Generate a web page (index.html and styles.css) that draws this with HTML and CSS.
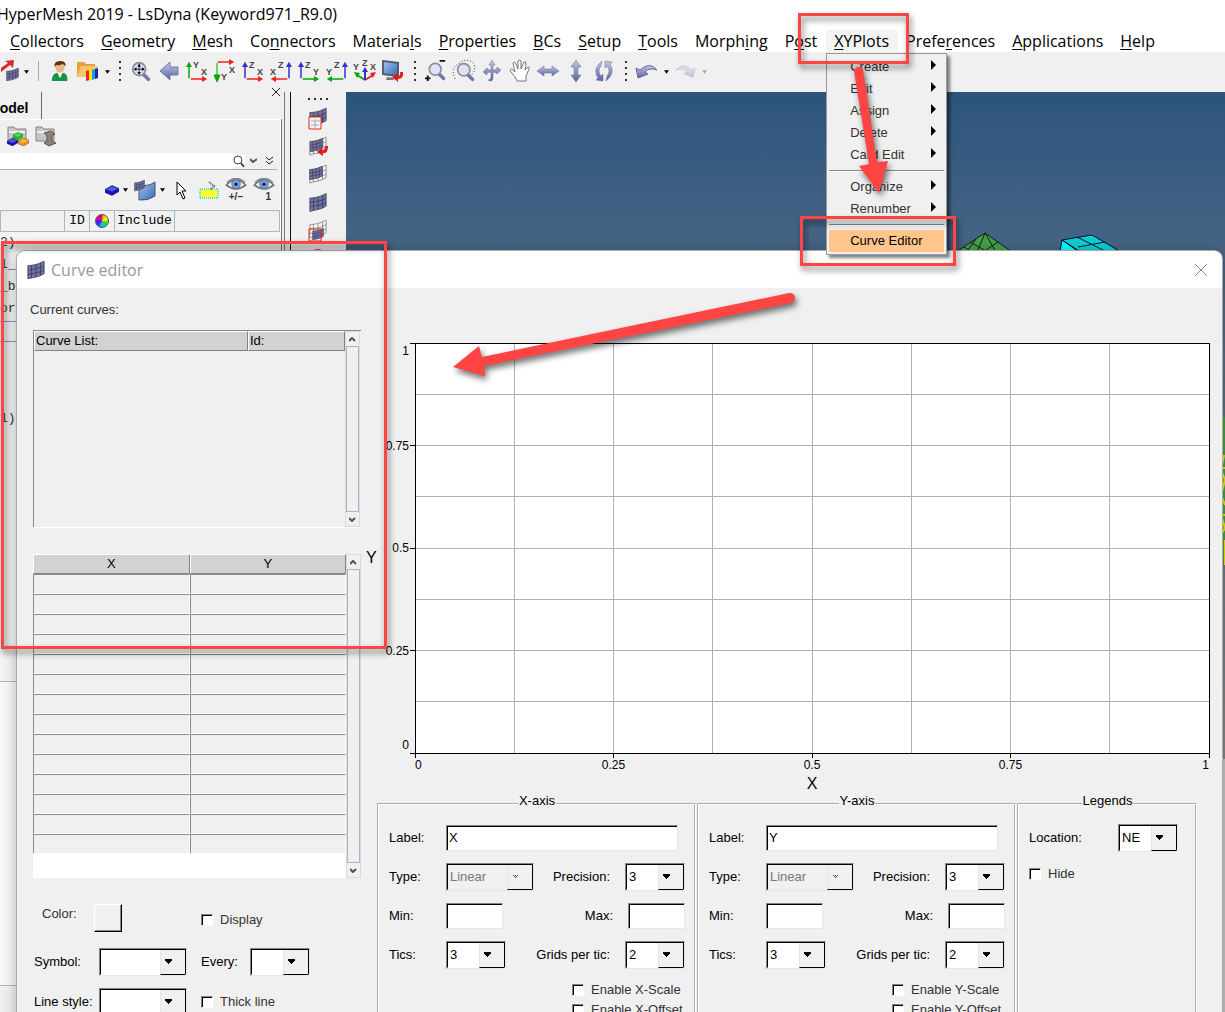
FILE: index.html
```html
<!DOCTYPE html>
<html lang="en">
<head>
<meta charset="utf-8">
<title>HyperMesh 2019 - LsDyna (Keyword971_R9.0)</title>
<link rel="stylesheet" href="styles.css">
</head>
<body>
<svg class="defs" aria-hidden="true">
  <defs>
    <linearGradient id="steel" x1="0" y1="0" x2="0" y2="1"><stop offset="0" stop-color="#c4c9ee"/><stop offset="1" stop-color="#5c629c"/></linearGradient>
    <linearGradient id="sheet" x1="0" y1="0" x2="1" y2="1"><stop offset="0" stop-color="#a9c8f5"/><stop offset="1" stop-color="#3566b4"/></linearGradient>
    <symbol id="mesh" viewBox="0 0 20 20"><path d="M1 5C6 5 12 4 19 0V14C14 18 6 18 1 20Z" fill="#6f73a4" stroke="#4a4a58"/><path d="M1 10C7 9 13 9 19 5M1 15C7 13 13 14 19 10M5 5V19M10 4V18M15 2V16" fill="none" stroke="#41415a"/></symbol>
    <symbol id="wire" viewBox="0 0 20 20"><path d="M1 5C6 5 12 4 19 0V14C14 18 6 18 1 20Z" fill="#f6f6f6" stroke="#8a8a8a"/><path d="M1 10C7 9 13 9 19 5M1 15C7 13 13 14 19 10M5 5V19M10 4V18M15 2V16" fill="none" stroke="#8a8a8a"/></symbol>
    <symbol id="lens" viewBox="0 0 24 24"><path d="M14 15L20 21" stroke="#7178a8" stroke-width="4" stroke-linecap="round"/><circle cx="10" cy="10" r="7" fill="#dfe3fa" stroke="#8f8f98" stroke-width="2"/></symbol>
    <symbol id="caret" viewBox="0 0 6 4"><path d="M0 0H6L3 4Z"/></symbol>
    <symbol id="eye" viewBox="0 0 24 16"><path d="M1 8Q12 -4 23 8Q12 17 1 8Z" fill="#fff" stroke="#777" stroke-width="2"/><circle cx="12" cy="7" r="5" fill="#7ba5dc" stroke="#4b6ea2"/><circle cx="12" cy="7" r="2" fill="#16294a"/><path d="M2 5Q12 -4 22 5" fill="none" stroke="#888" stroke-width="2"/></symbol>
    <symbol id="brick" viewBox="0 0 14 10"><path d="M0 4L7 0L14 3V6L7 10L0 7Z" fill="currentColor" stroke="#222" stroke-width=".5"/><path d="M1 4L7 1L13 3L7 6Z" fill="#fff" fill-opacity=".3"/></symbol>
    <symbol id="folder" viewBox="0 0 20 18"><path d="M1 16V2H7L9 4H19V16Z" fill="#c6c6c6" stroke="#858585"/><path d="M2 7H18" stroke="#eee" stroke-width="2"/></symbol>
    <symbol id="up" viewBox="0 0 8 22"><path d="M4 22V6" stroke="currentColor" stroke-width="2"/><path d="M0 7L4 0L8 7Z" fill="currentColor"/></symbol>
    <symbol id="right" viewBox="0 0 22 8"><path d="M0 4H16" stroke="currentColor" stroke-width="2"/><path d="M15 0L22 4L15 8Z" fill="currentColor"/></symbol>
    <symbol id="left" viewBox="0 0 22 8"><path d="M22 4H6" stroke="currentColor" stroke-width="2"/><path d="M7 0L0 4L7 8Z" fill="currentColor"/></symbol>
  </defs>
</svg>

<header class="titlebar">HyperMesh 2019 - LsDyna (Keyword971_R9.0)</header>
<nav class="menubar">
  <a href="#"><u>C</u>ollectors</a><a href="#"><u>G</u>eometry</a><a href="#"><u>M</u>esh</a><a href="#">Co<u>n</u>nectors</a><a href="#">Materia<u>l</u>s</a><a href="#"><u>P</u>roperties</a><a href="#"><u>B</u>Cs</a><a href="#"><u>S</u>etup</a><a href="#"><u>T</u>ools</a><a href="#">Morph<u>i</u>ng</a><a href="#">P<u>o</u>st</a><span class="open-item"><a class="open" href="#"><u>X</u>YPlots</a>
    <span class="menu">
      <button>Create</button><button>Edit</button><button>Assign</button><button>Delete</button><button>Card Edit</button>
      <i></i>
      <button>Organize</button><button>Renumber</button>
      <i></i>
      <button class="chosen">Curve Editor</button>
    </span></span><a href="#">Prefe<u>r</u>ences</a><a href="#"><u>A</u>pplications</a><a href="#"><u>H</u>elp</a>
</nav>

<div class="toolbar">
  <button class="first" aria-label="Export mesh"><svg width="20" height="22" viewBox="0 0 20 22"><use href="#mesh" x="5" y="8" width="13" height="13"/><path d="M0 8L7 3L4 1L13 0L12 8L9 5L0 12Z" fill="#d8262c"/></svg></button>
  <button class="drop" aria-label="More"><svg width="5" height="4"><use href="#caret"/></svg></button>
  <i class="rule"></i>
  <button aria-label="User profile"><svg width="20" height="24" viewBox="0 0 22 24"><path d="M2 23Q2 15 8 14L11 17L14 14Q20 15 19 23Z" fill="#169447"/><path d="M8 13L11 20L14 13Z" fill="#fff"/><ellipse cx="11" cy="8" rx="5" ry="6" fill="#e9b886"/><path d="M5 8Q4 1 11 1Q18 1 17 7L14 4Q9 7 7 5Z" fill="#5a3518"/></svg></button>
  <button aria-label="Open"><svg width="24" height="24" viewBox="0 0 24 24"><path d="M1 17V3H8L10 5H19V17Z" fill="#e2a23e"/><path d="M1 18L5 7H22L18 18Z" fill="#f7c767"/><path d="M10 12L14 11V21L10 22Z" fill="#e22"/><path d="M13 11L16 11V21L13 21Z" fill="#ffe600"/><path d="M16 11L19 10V20L16 21Z" fill="#1b9ce0"/><path d="M19 10L22 9V19L19 20Z" fill="#1726b5"/></svg></button>
  <button class="drop" aria-label="More"><svg width="5" height="4"><use href="#caret"/></svg></button>
  <i class="grip"></i>
  <button aria-label="Fit"><svg width="22" height="24" viewBox="0 0 24 24"><use href="#lens"/><path d="M5 10H15M10 5V15" stroke="#222"/><path d="M4 10L7 8V12ZM16 10L13 8V12ZM10 4L8 7H12ZM10 16L8 13H12Z"/></svg></button>
  <button aria-label="Previous view"><svg width="20" height="20" viewBox="0 0 20 20"><path d="M1 10L11 1V6H19V14H11V19Z" fill="url(#steel)" stroke="#777ba6"/></svg></button>
  <button aria-label="XY top view"><svg width="24" height="24"><use href="#up" x="1" y="1" width="6" height="20" color="#0a0"/><use href="#right" x="4" y="17" width="20" height="6" color="#e22"/><text x="8" y="9">Y</text><text x="16" y="16">X</text></svg></button>
  <button aria-label="XY bottom view"><svg width="24" height="24"><use href="#right" x="3" y="0" width="20" height="6" color="#e22"/><path d="M4 4V18M1 16L4 23L7 16Z" stroke="#0a0" fill="#0a0"/><text x="8" y="21">Y</text><text x="16" y="14">X</text></svg></button>
  <button aria-label="XZ left view"><svg width="24" height="24"><use href="#up" x="1" y="1" width="6" height="20" color="#33c"/><use href="#right" x="4" y="17" width="20" height="6" color="#e22"/><text x="8" y="9">Z</text><text x="16" y="16">X</text></svg></button>
  <button aria-label="XZ right view"><svg width="24" height="24"><use href="#up" x="17" y="1" width="6" height="20" color="#33c"/><use href="#left" x="0" y="17" width="20" height="6" color="#e22"/><text x="9" y="9">Z</text><text x="1" y="16">X</text></svg></button>
  <button aria-label="YZ rear view"><svg width="24" height="24"><use href="#up" x="1" y="1" width="6" height="20" color="#33c"/><use href="#right" x="4" y="17" width="20" height="6" color="#0a0"/><text x="8" y="9">Z</text><text x="16" y="16">Y</text></svg></button>
  <button aria-label="YZ front view"><svg width="24" height="24"><use href="#up" x="17" y="1" width="6" height="20" color="#33c"/><use href="#left" x="0" y="17" width="20" height="6" color="#0a0"/><text x="9" y="9">Z</text><text x="1" y="16">Y</text></svg></button>
  <button aria-label="Isometric view"><svg width="24" height="24"><path d="M12 21L4 16" stroke="#0a0" stroke-width="2"/><path d="M1 13L7 14L4 19Z" fill="#0a0"/><path d="M12 21L20 16" stroke="#e22" stroke-width="2"/><path d="M23 13L17 14L20 19Z" fill="#e22"/><path d="M12 21V12" stroke="#33c" stroke-width="2"/><path d="M9 13L12 8L15 13Z" fill="#33c"/><text x="9" y="7">Z</text><text x="0" y="11">Y</text><text x="17" y="11">X</text></svg></button>
  <button aria-label="Reverse view"><svg width="22" height="22" viewBox="0 0 22 22"><path d="M1 1L16 3V16L1 14Z" fill="url(#sheet)" stroke="#56606e" stroke-width="2"/><path d="M5 17L13 18L11 20H4Z" fill="#777"/><path d="M21 12Q22 19 16 19V22L10 17L16 13V16Q19 16 18 12Z" fill="#e01b1b"/></svg></button>
  <i class="grip"></i>
  <button aria-label="Zoom in or out"><svg width="22" height="24" viewBox="0 0 24 24"><use href="#lens" x="2" y="1" width="22" height="22"/><path d="M16 1H22M0 20H6M3 17V23" stroke="#111" stroke-width="2"/></svg></button>
  <button aria-label="Circle zoom"><svg width="24" height="24" viewBox="0 0 24 24"><path d="M3 20Q-2 8 8 4Q16 -2 22 5Q24 12 19 16" fill="none" stroke="#333" stroke-dasharray="1 2"/><use href="#lens" x="3" y="2" width="21" height="21"/></svg></button>
  <button aria-label="Rotate"><svg width="20" height="22" viewBox="0 0 20 22"><path d="M10 0L7 5H9V10Q6 10 5 8L1 12L5 15V13Q7 12 9 12V17Q9 20 6 20Q11 23 11 17V12Q14 12 15 14L19 10L15 7V9Q13 10 11 10V5H13Z" fill="url(#steel)" stroke="#676b96" stroke-width=".5"/></svg></button>
  <button aria-label="Pan"><svg width="22" height="24" viewBox="0 0 22 24"><path d="M8 22Q7 18 2 13Q0 10 3 10L6 13L4 4Q6 2 7 5L9 10L9 2Q11 0 12 2L12 10L15 3Q17 2 17 5L16 11L19 8Q21 8 20 10L17 17V22Z" fill="#fff" stroke="#777"/></svg></button>
  <button aria-label="Rotate horizontal"><svg width="22" height="12" viewBox="0 0 22 12"><path d="M0 6L7 1V4H15V1L22 6L15 11V8H7V11Z" fill="url(#steel)" stroke="#676b96" stroke-width=".5"/></svg></button>
  <button aria-label="Rotate vertical"><svg width="12" height="22" viewBox="0 0 12 22"><path d="M6 0L11 7H8V15H11L6 22L1 15H4V7H1Z" fill="url(#steel)" stroke="#676b96" stroke-width=".5"/></svg></button>
  <button aria-label="Spin"><svg width="20" height="22" viewBox="0 0 20 22"><path d="M8 1L7 6Q3 11 7 16L9 14V21L2 20L4 18Q-2 9 8 1ZM12 21L13 16Q17 11 13 6L11 8V1L18 2L16 4Q22 13 12 21Z" fill="url(#steel)" stroke="#676b96" stroke-width=".5"/></svg></button>
  <i class="grip"></i>
  <button aria-label="Undo"><svg width="24" height="16" viewBox="0 0 24 16"><path d="M1 5L3 15L13 11L10 9Q14 4 22 7Q15 -2 5 7Z" fill="url(#steel)" stroke="#676b96"/></svg></button>
  <button class="drop" aria-label="More"><svg width="5" height="4"><use href="#caret"/></svg></button>
  <button disabled aria-label="Redo"><svg width="22" height="16" viewBox="0 0 24 16"><path d="M23 5L21 15L11 11L14 9Q10 4 2 7Q9 -2 19 7Z" fill="url(#steel)" stroke="#676b96"/></svg></button>
  <button class="drop" disabled aria-label="More"><svg width="5" height="4"><use href="#caret"/></svg></button>
</div>

<main class="workspace">
  <section class="browser">
    <div class="tabs"><span class="tab">Model</span><button class="close-panel" aria-label="Close panel"><svg width="8" height="8"><path d="M0 0L8 8M8 0L0 8" stroke="#222"/></svg></button></div>
    <div class="panel">
      <div class="views">
        <svg width="22" height="22"><use href="#folder" width="20" height="18"/><use href="#brick" x="6" y="7" width="10" height="8" color="#1c1"/><use href="#brick" x="0" y="13" width="11" height="8" color="#11c"/><use href="#brick" x="11" y="13" width="11" height="8" color="#e90"/></svg>
        <svg width="22" height="22"><use href="#folder" width="20" height="18"/><path d="M9 8L16 6L20 9L17 11V16L21 18L14 21L9 18L12 16V11Z" fill="#8c7f7c" stroke="#5b5250"/></svg>
      </div>
      <div class="search"><input type="text" aria-label="Search"><svg width="12" height="12"><circle cx="5" cy="5" r="4" fill="none" stroke="#444"/><path d="M8 8L11 12" stroke="#444" stroke-width="2"/></svg><button aria-label="Search options"><svg width="7" height="6"><path d="M0 1L3 4L7 1" fill="none" stroke="#555" stroke-width="2"/></svg></button><button class="expand" aria-label="Expand"><svg width="7" height="9"><path d="M0 1L3 4L7 1M0 5L3 8L7 5" fill="none" stroke="#223"/></svg></button></div>
      <div class="filters">
        <button aria-label="Components"><svg width="14" height="11"><use href="#brick" width="14" height="11" color="#11c"/></svg></button><svg class="tiny" width="5" height="4"><use href="#caret"/></svg>
        <button aria-label="Elements and geometry"><svg width="22" height="22"><path d="M5 6Q14 8 21 3V17Q14 22 5 21Z" fill="url(#sheet)" stroke="#456"/><use href="#mesh" width="11" height="13"/></svg></button><svg class="tiny" width="5" height="4"><use href="#caret"/></svg>
        <button class="pointer" aria-label="Select"><svg width="11" height="19"><path d="M1 1V14L4 11L7 18L9 17L6 10H10Z" fill="#fff" stroke="#000"/></svg></button>
        <button aria-label="Highlight"><svg width="20" height="20"><path d="M1 9H19V18H1Z" fill="#ff3" stroke="#5de" stroke-width="2" stroke-dasharray="1 1"/><path d="M10 2L15 6L11 10" fill="none" stroke="#555" stroke-width="2" stroke-dasharray="1 1"/></svg></button>
        <button class="see" aria-label="Show or hide"><svg width="22" height="14"><use href="#eye"/></svg>+/−</button>
        <button class="see" aria-label="Isolate"><svg width="22" height="14"><use href="#eye"/></svg>&nbsp;&nbsp;&nbsp;1</button>
      </div>
      <table class="columns"><tr><th class="name"></th><th class="id">ID</th><th class="hue"><span class="wheel"></span></th><th class="inc">Include</th><th></th></tr></table>
      <ul class="tree"><li>2)</li><li>l_b</li><li>_be</li><li>or</li><li class="edit"></li><li class="gap"></li><li>1)</li></ul>
      <div class="entity"></div>
    </div>
  </section>
  <aside class="strip">
    <i class="dots"></i>
    <svg width="20" height="22"><use href="#mesh" x="1" width="18" height="18"/><path d="M1 9H13V21H1Z" fill="#f4f4f4" stroke="#e32b12"/><path d="M3 13H12M3 17H11M7 11V20" stroke="#aaa"/></svg>
    <svg width="20" height="22"><use href="#wire" x="1" width="18" height="20"/><use href="#mesh" x="1" y="2" width="15" height="14"/><path d="M20 10Q20 18 15 17V20L9 16L14 12V15Q17 14 17 10Z" fill="#e01b1b"/></svg>
    <svg width="20" height="22"><use href="#wire" x="1" width="18" height="20"/><use href="#mesh" x="1" y="2" width="14" height="14"/></svg>
    <svg width="20" height="22"><use href="#mesh" x="1" y="1" width="18" height="19"/></svg>
    <svg width="20" height="22"><use href="#wire" x="1" width="18" height="18"/><use href="#mesh" x="3" y="8" width="14" height="12"/><path d="M1 9H13V21H1Z" fill="none" stroke="#e32b12"/></svg>
    <svg width="20" height="22"><circle cx="10" cy="10" r="8" fill="#bbb" stroke="#e32b12" stroke-width="2"/></svg>
  </aside>
  <section class="scene">
    <div class="viewport">
      <svg class="green" width="56" height="22"><g stroke="#102010"><path d="M0 22L29 3L56 22Z" fill="#43a047"/><path d="M29 3L21 22M29 3L40 22M14 12L21 16L32 22M8 17L16 22M42 12L30 20M20 9L12 20" fill="none"/></g></svg>
      <svg class="cyan" width="64" height="18"><g stroke="#013"><path d="M3 6L33 1L62 18H1Z" fill="#0cd0d3"/><path d="M3 6L1 18H20Z" fill="#0ff"/><path d="M18 3L48 18M19 13L46 8M3 6L22 18" fill="none"/></g></svg>
      <svg class="edge" width="4" height="156"><path d="M0 0L4 8V150H0Z" fill="#43a047"/><path d="M3 45L0 60L4 70L0 85L4 95M0 105L4 118L0 125M0 58H4M0 105H4M1 130V155M4 130V155" fill="none" stroke="#f2ea00" stroke-width="2"/></svg>
    </div>
    <div class="lower"></div>
  </section>
</main>

<section class="dialog" role="dialog" aria-label="Curve editor">
  <header><svg width="20" height="20"><use href="#mesh" x="1" y="1" width="18" height="18"/></svg><span>Curve editor</span><button aria-label="Close"><svg width="12" height="12"><path d="M0 0L12 12M12 0L0 12" stroke="#888"/></svg></button></header>
  <div class="body">
    <div class="lists">
      <p>Current curves:</p>
      <div class="curve-list">
        <table><tr><th class="curve">Curve List:</th><th>Id:</th></tr></table>
        <div class="scroll"><button aria-label="Up"><svg width="7" height="5"><path d="M0 4L3 1L6 4" /></svg></button><i></i><button aria-label="Down"><svg width="7" height="5"><path d="M0 1L3 4L6 1"/></svg></button></div>
      </div>
      <div class="points">
        <div class="sheet"><table>
          <tr><th>X</th><th>Y</th></tr>
          <tr><td></td><td></td></tr><tr><td></td><td></td></tr><tr><td></td><td></td></tr><tr><td></td><td></td></tr><tr><td></td><td></td></tr><tr><td></td><td></td></tr><tr><td></td><td></td></tr>
          <tr><td></td><td></td></tr><tr><td></td><td></td></tr><tr><td></td><td></td></tr><tr><td></td><td></td></tr><tr><td></td><td></td></tr><tr><td></td><td></td></tr><tr><td></td><td></td></tr>
        </table></div>
        <div class="scroll"><button aria-label="Up"><svg width="7" height="5"><path d="M0 4L3 1L6 4"/></svg></button><i></i><button aria-label="Down"><svg width="7" height="5"><path d="M0 1L3 4L6 1"/></svg></button></div>
      </div>
      <div class="style-form">
        <div class="row tall"><label class="key indent" for="color">Color:</label><button id="color" class="swatch"></button><label class="check"><input type="checkbox">Display</label></div>
        <div class="row"><label class="key" for="symbol">Symbol:</label><span class="combo wide"><select id="symbol"><option></option></select></span><label class="every" for="every">Every:</label><span class="combo"><select id="every"><option></option></select></span></div>
        <div class="row"><label class="key" for="linestyle">Line style:</label><span class="combo wide"><select id="linestyle"><option></option></select></span><label class="check"><input type="checkbox">Thick line</label></div>
      </div>
    </div>
    <div class="graph">
      <div class="chart">
        <div class="y-title">Y</div>
        <div class="y-ticks"><span>1</span><span>0.75</span><span>0.5</span><span>0.25</span><span>0</span></div>
        <svg class="plot">
          <rect width="100%" height="100%" fill="#fff"/>
          <g stroke="#b0b0b0"><line x1="12.5%" x2="12.5%" y2="100%"/><line x1="25%" x2="25%" y2="100%"/><line x1="37.5%" x2="37.5%" y2="100%"/><line x1="50%" x2="50%" y2="100%"/><line x1="62.5%" x2="62.5%" y2="100%"/><line x1="75%" x2="75%" y2="100%"/><line x1="87.5%" x2="87.5%" y2="100%"/><line y1="12.5%" y2="12.5%" x2="100%"/><line y1="25%" y2="25%" x2="100%"/><line y1="37.5%" y2="37.5%" x2="100%"/><line y1="50%" y2="50%" x2="100%"/><line y1="62.5%" y2="62.5%" x2="100%"/><line y1="75%" y2="75%" x2="100%"/><line y1="87.5%" y2="87.5%" x2="100%"/></g>
          <g stroke="#000"><rect width="100%" height="100%" fill="none"/><line x1="-5" x2="0"/><line x1="-5" x2="0" y1="25%" y2="25%"/><line x1="-5" x2="0" y1="50%" y2="50%"/><line x1="-5" x2="0" y1="75%" y2="75%"/><line x1="-5" x2="0" y1="100%" y2="100%"/></g>
          <svg y="100%" height="5" width="100%" overflow="visible" stroke="#000"><line y2="5"/><line x1="25%" x2="25%" y2="5"/><line x1="50%" x2="50%" y2="5"/><line x1="75%" x2="75%" y2="5"/><line x1="100%" x2="100%" y2="5"/></svg>
        </svg>
        <div class="x-ticks"><span>0</span><span>0.25</span><span>0.5</span><span>0.75</span><span>1</span></div>
        <div class="x-title">X</div>
      </div>
      <div class="groups">
        <fieldset><legend>X-axis</legend>
          <div class="row"><label class="key" for="xl">Label:</label><input id="xl" class="text full" type="text" value="X"></div>
          <div class="row"><label class="key" for="xt">Type:</label><span class="combo wide off"><select id="xt" disabled><option>Linear</option></select></span><label class="second" for="xp">Precision:</label><span class="combo"><select id="xp"><option>3</option></select></span></div>
          <div class="row"><label class="key" for="xmin">Min:</label><input id="xmin" class="text" type="text"><label class="second" for="xmax">Max:</label><input id="xmax" class="text" type="text"></div>
          <div class="row"><label class="key" for="xtic">Tics:</label><span class="combo"><select id="xtic"><option>3</option></select></span><label class="second" for="xg">Grids per tic:</label><span class="combo"><select id="xg"><option>2</option></select></span></div>
          <div class="checks"><label class="check"><input type="checkbox">Enable X-Scale</label><label class="check"><input type="checkbox">Enable X-Offset</label></div>
        </fieldset>
        <fieldset><legend>Y-axis</legend>
          <div class="row"><label class="key" for="yl">Label:</label><input id="yl" class="text full" type="text" value="Y"></div>
          <div class="row"><label class="key" for="yt">Type:</label><span class="combo wide off"><select id="yt" disabled><option>Linear</option></select></span><label class="second" for="yp">Precision:</label><span class="combo"><select id="yp"><option>3</option></select></span></div>
          <div class="row"><label class="key" for="ymin">Min:</label><input id="ymin" class="text" type="text"><label class="second" for="ymax">Max:</label><input id="ymax" class="text" type="text"></div>
          <div class="row"><label class="key" for="ytic">Tics:</label><span class="combo"><select id="ytic"><option>3</option></select></span><label class="second" for="yg">Grids per tic:</label><span class="combo"><select id="yg"><option>2</option></select></span></div>
          <div class="checks"><label class="check"><input type="checkbox">Enable Y-Scale</label><label class="check"><input type="checkbox">Enable Y-Offset</label></div>
        </fieldset>
        <fieldset class="legends"><legend>Legends</legend>
          <div class="row"><label class="location" for="loc">Location:</label><span class="combo"><select id="loc"><option>NE</option></select></span></div>
          <div class="row"><label class="check"><input type="checkbox">Hide</label></div>
        </fieldset>
      </div>
    </div>
  </div>
</section>

<svg class="notes" width="1225" height="1012" aria-hidden="true">
  <g fill="#ff4444">
    <path fill-rule="evenodd" d="M798 13H909V64H798ZM801 16V61H906V16ZM800 216H956V266H800ZM803 219V263H953V219ZM1 241H387V649H1ZM4 244V646H384V244Z"/>
    <path d="M854 71A5 5 0 0 1 863 69L877 162L888 161L879 193L859 166L869 164Z"/><path d="M789 293A5 5 0 0 1 791 303L484 366L485 376L453 367L479 346L482 357Z"/>
  </g>
</svg>
</body>
</html>
```
FILE: styles.css
```css
* { box-sizing: border-box; }
html, body { height: 100%; }
body {
  margin: 0;
  display: flex;
  flex-direction: column;
  position: relative;
  overflow: hidden;
  background: #f0f0f0;
  color: #000;
  font: 13px/16px "Liberation Sans", Arial, sans-serif;
}
button, input, select { font: inherit; color: inherit; margin: 0; }
button { border: 0; padding: 0; background: none; }
.defs { position: absolute; width: 0; height: 0; }

/* main window */
.titlebar { height: 30px; margin-left: -3px; font: 16px/28px "Open Sans", sans-serif; white-space: nowrap; }
.titlebar, .menubar { background: #fff; flex: none; }
.menubar { display: flex; height: 22px; padding-left: 2px; font: 16px/22px "Open Sans", sans-serif; white-space: nowrap; }
.menubar a { display: block; padding: 0 9px 0 8px; color: #000; text-decoration: none; }
.menubar u { text-underline-offset: 2px; }
.open-item { position: relative; }
.menubar .open { background: #f3f3f3; border-radius: 3px 3px 0 0; }
.menu {
  position: absolute; z-index: 5; top: 23px; left: 0;
  display: flex; flex-direction: column;
  width: 121px; padding: 2px;
  background: #f0f0f0; border: 1px solid #999;
  box-shadow: 3px 3px 3px rgba(0, 0, 0, .5);
  font: 13px/22px "Liberation Sans", Arial, sans-serif;
}
.menu button { display: flex; align-items: center; justify-content: space-between; height: 22px; padding: 0 8px 0 21px; color: #333; }
.menu button:not(.chosen)::after { content: ""; border: solid transparent; border-width: 5px 0 5px 5px; border-left-color: #000; margin-bottom: 5px; }
.menu .chosen { background: #ffc58b; color: #000; }
.menu i { height: 2px; margin: 4px 0; background: #888; border-bottom: 1px solid #fff; }

.toolbar { display: flex; align-items: center; flex: none; height: 40px; padding-bottom: 2px; }
.toolbar button { display: flex; align-items: center; justify-content: center; width: 28px; height: 28px; }
.toolbar .first { width: 21px; }
.toolbar .drop { width: 10px; padding-top: 2px; }
.toolbar button:disabled { opacity: .3; }
.toolbar text { font: bold 9px "Liberation Sans", Arial, sans-serif; fill: #444; }
.toolbar .rule { width: 1px; height: 20px; margin: 0 7px; background: #aaa; }
.grip { width: 2px; height: 20px; margin: 0 6px 0 7px; background: repeating-linear-gradient(#333 0 2px, transparent 2px 6px); }

.workspace { display: flex; flex: 1; min-height: 0; }
.browser { display: flex; flex-direction: column; width: 285px; border-right: 1px solid #777; }
.tabs { display: flex; justify-content: space-between; align-items: flex-start; height: 27px; }
.tab { width: 54px; height: 27px; margin-left: -12px; border-right: 1px solid #666; font: bold 14px/32px "Liberation Sans", Arial, sans-serif; }
.close-panel { padding: 0 4px; line-height: 0; margin-top: -4px; }
.panel { display: flex; flex-direction: column; flex: 1; width: 282px; border: solid #777; border-width: 0 1px 0 0; box-shadow: inset -1px 1px #fff; }
.views { display: flex; gap: 6px; height: 33px; padding: 6px 0 0 7px; }
.search { display: flex; align-items: center; height: 18px; border-bottom: 1px solid #aaa; margin-right: 4px; }
.search input { flex: 1; min-width: 0; height: 16px; border: 0; padding: 0; }
.search svg { display: block; }
.search > svg { background: #fff; }
.search button { width: 16px; display: flex; justify-content: center; }
.filters { display: flex; align-items: center; justify-content: flex-end; gap: 6px; height: 40px; padding-right: 6px; }
.filters svg { display: block; }
.filters .tiny { margin-left: -2px; }
.filters .pointer { margin: 0 6px 0 5px; }
.see { font: bold 10px/10px "Liberation Sans", Arial, sans-serif; color: #333; }
.columns { table-layout: fixed; width: 280px; border-collapse: collapse; font: 13px/18px "Liberation Mono", monospace; }
.columns th { height: 21px; padding: 0 2px; border: 1px solid #a9b9c4; font-weight: normal; }
.columns .name { width: 64px; }
.columns .id, .columns .hue { width: 25px; }
.columns .inc { width: 60px; }
.wheel { display: block; width: 14px; height: 14px; margin: auto; border-radius: 50%; border: 1px solid #555; background: conic-gradient(#f66, #ff0, #3c3, #0cf, #22f, #c0c, #f00); }
.tree { height: 449px; margin: 0; padding: 0; list-style: none; font: 13px/22px "Liberation Mono", monospace; color: #333; background: #f4f4f4; }
.tree li { height: 22px; }
.tree .edit { margin-top: 1px; border: solid #7b98c0; border-width: 1px 0; height: 21px; }
.tree .gap { height: 66px; }
.entity { flex: 1; margin-bottom: 26px; border: solid #a9b9c4; border-width: 1px 0; background: #f8f8f8; }

.strip { display: flex; flex-direction: column; align-items: center; gap: 6px; width: 56px; margin-left: 5px; padding: 6px 2px 0 0; border-left: 1px solid #111; }
.strip svg { flex: none; }
.dots { width: 20px; height: 2px; margin-bottom: 2px; background: repeating-linear-gradient(90deg, #333 0 2px, transparent 2px 6px); }
.scene { display: flex; flex-direction: column; flex: 1; }
.viewport { position: relative; flex: 667; background: linear-gradient(#2c547c, #476585 24%, #878787); }
.lower { flex: 253; background: #c6c6c6; }
.green, .cyan, .edge { position: absolute; }
.green { left: 610px; top: 138px; }
.cyan { left: 713px; top: 142px; }
.edge { right: 0; top: 318px; }

/* curve editor window */
.dialog { position: absolute; left: 17px; right: 3px; top: 251px; background: #f0f0f0; border-radius: 8px 8px 0 0; box-shadow: 0 0 0 1px #aaa, 0 2px 16px rgba(0, 0, 0, .3); }
.dialog header { display: flex; align-items: center; gap: 5px; height: 37px; padding: 0 15px 0 9px; background: #fff; border-radius: 8px 8px 0 0; color: #999; font: 16px/36px "Open Sans", sans-serif; }
.dialog header span { flex: 1; }
.dialog header button { line-height: 0; }
.body { display: flex; }
.lists { flex: none; width: 344px; padding: 14px 0 20px 16px; color: #000; }
.lists p { margin: 0 0 12px -3px; color: #333; }
.curve-list, .points { display: flex; align-items: stretch; }
.curve-list { height: 197px; border: 1px solid #888; border-width: 1px 0 0 1px; box-shadow: 0 1px #fff; }
.curve-list table { width: 311px; height: 20px; border-spacing: 0; table-layout: fixed; }
.lists th { height: 20px; padding: 0 1px; font-weight: normal; text-align: left; background: #d2d2d2; border: 1px solid; border-color: #fff #848484 #848484 #fff; }
.curve-list .curve { width: 214px; }
.scroll { display: flex; flex-direction: column; width: 15px; background: #fff; border: 1px solid #d5dce2; }
.scroll button { height: 14px; line-height: 0; background: #f0f0f0; }
.scroll i { flex: 1; background: #f0f0f0; border: 1px solid #a9b7c4; }
.scroll path { fill: none; stroke: #555; stroke-width: 2; }
.points { height: 324px; margin-top: 27px; }
.sheet { width: 313px; background: #fff; }
.sheet table { width: 313px; border-spacing: 0; table-layout: fixed; }
.lists .sheet th { text-align: center; }
.sheet td { height: 20px; padding: 0; background: #f0f0f0; border: 1px solid; border-color: #8c8c8c #fff #fff #8c8c8c; }
.style-form { padding-top: 20px; }
.row { display: flex; align-items: center; white-space: nowrap; }
.style-form .row { height: 40px; }
.style-form .tall { height: 44px; }
.style-form .key { width: 66px; padding-left: 1px; }
.style-form .indent { width: 61px; padding: 0 0 12px 9px; color: #333; }
.every { width: 49px; margin-left: 14px; }
.style-form .check { margin-left: 14px; }
.swatch { width: 28px; height: 28px; margin: 0 65px 4px 0; background: #f0f0f0; border: 1px solid; border-color: #fff #000 #000 #fff; box-shadow: inset -1px -1px #888; }

.check { display: flex; align-items: center; gap: 7px; color: #333; }
.check input { appearance: none; width: 12px; height: 12px; background: #fff; border: 1px solid; border-color: #848484 #fff #fff #848484; box-shadow: inset 1px 1px #000; }
.text { width: 57px; height: 26px; padding: 0 2px; border: 1px solid; border-color: #848484 #e6e6e6 #e6e6e6 #848484; box-shadow: inset 1px 1px #000; background: #fff; }
.full { width: 232px; }
.combo { position: relative; flex: none; width: 60px; height: 28px; border: 1px solid; border-color: #848484 #e6e6e6 #e6e6e6 #848484; background: #fff; }
.wide { width: 88px; }
.combo select { appearance: none; width: 100%; height: 100%; padding: 0 24px 0 2px; border: 1px solid #000; border-bottom-color: #fff; border-radius: 0; background: transparent; opacity: 1; }
.combo::after { content: ""; position: absolute; pointer-events: none; right: 1px; top: 1px; bottom: 0; width: 24px; border-left: 1px solid #e6e6e6; border-bottom: 1px solid #000; background: linear-gradient(#000, #000) 4px 9px / 7px 1px no-repeat, linear-gradient(#000, #000) 4px 10px / 7px 1px no-repeat, linear-gradient(#000, #000) 5px 11px / 5px 1px no-repeat, linear-gradient(#000, #000) 6px 12px / 3px 1px no-repeat, linear-gradient(#000, #000) 7px 13px / 1px 1px no-repeat, #f0f0f0; }
.off, .off select { background: #f0f0f0; color: #777; }
.off select { border-bottom-color: #f0f0f0; }
.off::after { background: linear-gradient(90deg, #555 1px, #f0f0f0 1px 2px, #555 2px 3px, #f0f0f0 3px 4px, #555 4px) 5px 10px / 5px 1px no-repeat, linear-gradient(90deg, #555 1px, #f0f0f0 1px 2px, #555 2px) 6px 11px / 3px 1px no-repeat, linear-gradient(#555, #555) 7px 12px / 1px 1px no-repeat, #f0f0f0; }

.graph { flex: 1; min-width: 0; padding-top: 55px; }
.chart { display: grid; grid-template-columns: 15px 34px 1fr; grid-template-rows: 410px 22px 18px; margin: 0 13px 0 5px; font-size: 12px; }
.y-title, .x-title { font-size: 16px; line-height: 18px; }
.y-title { margin-top: 206px; }
.y-ticks { display: grid; grid-template-rows: 1fr 2fr 2fr 2fr 1fr; align-items: center; padding-right: 6px; text-align: right; }
.y-ticks span:first-child { align-self: start; }
.y-ticks span:last-child { align-self: end; }
.plot { grid-column: 3; width: 100%; height: 100%; overflow: visible; shape-rendering: crispEdges; }
.x-ticks { grid-column: 3; display: grid; grid-template-columns: 1fr 2fr 2fr 2fr 1fr; padding-top: 4px; text-align: center; }
.x-ticks span:first-child { text-align: left; }
.x-ticks span:last-child { text-align: right; }
.x-title { grid-column: 3; text-align: center; }
.groups { display: grid; grid-template-columns: 319fr 319fr 180fr; gap: 1px; margin: 0 25px 0 16px; }
fieldset { min-width: 0; margin: 0; padding: 3px 9px 40px 10px; border: 2px groove #fff; }
legend { margin: 0 auto; padding: 0 1px 6px; }
fieldset .row { height: 39px; }
fieldset .key { width: 57px; }
.second { margin-left: auto; margin-right: 15px; }
.checks { width: 113px; margin: 6px 0 0 auto; }
.checks .check { height: 20px; white-space: nowrap; }
.legends .row { justify-content: space-between; padding-right: 8px; }
.legends .row + .row { height: 34px; }

.notes { position: absolute; left: 0; top: 0; z-index: 10; pointer-events: none; filter: drop-shadow(2px 4px 3px rgba(0, 0, 0, .55)); }
```
